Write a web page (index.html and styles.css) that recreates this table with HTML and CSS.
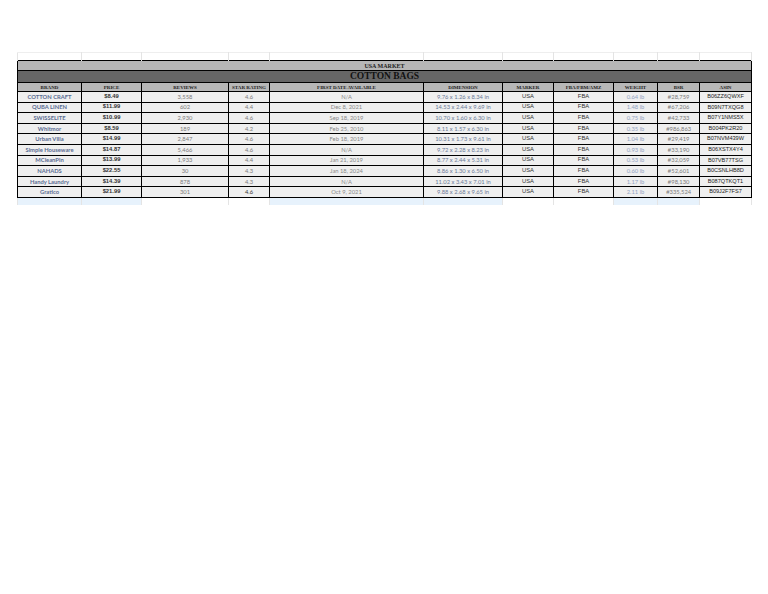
FILE: index.html
```html
<!DOCTYPE html>
<html>
<head>
<meta charset="utf-8">
<link rel="stylesheet" href="styles.css">
</head>
<body>
<table class="sheet">
  <colgroup>
    <col style="width:64px"><col style="width:60px"><col style="width:87px"><col style="width:41px"><col style="width:154px"><col style="width:79px"><col style="width:51px"><col style="width:60px"><col style="width:44px"><col style="width:42px"><col style="width:52px">
  </colgroup>
  <tr class="grid-row">
    <td></td><td></td><td></td><td></td><td></td><td></td><td></td><td></td><td></td><td></td><td></td>
  </tr>
  <tr class="market"><td colspan="11">USA MARKET</td></tr>
  <tr class="title"><td colspan="11">COTTON BAGS</td></tr>
  <tr class="head">
    <td>BRAND</td><td>PRICE</td><td>REVIEWS</td><td>STAR RATING</td><td>FIRST DATE AVAILABLE</td><td>DIMENSION</td><td>MARKER</td><td>FBA/FBM/AMZ</td><td>WEIGHT</td><td>BSR</td><td>ASIN</td>
  </tr>
  <tr class="data"><td class="brand">COTTON CRAFT</td><td class="price">$8.49</td><td class="muted">3,558</td><td class="muted">4.6</td><td class="date">N/A</td><td class="dim">9.76 x 1.26 x 8.34 in</td><td class="dark">USA</td><td class="dark">FBA</td><td class="wt">0.64 lb</td><td class="muted">#28,759</td><td class="asin">B06ZZ6QWXF</td></tr>
  <tr class="data"><td class="brand">QUBA LINEN</td><td class="price">$11.99</td><td class="muted">602</td><td class="muted">4.4</td><td class="date">Dec 8, 2021</td><td class="dim">14.53 x 2.44 x 9.69 in</td><td class="dark">USA</td><td class="dark">FBA</td><td class="wt">1.48 lb</td><td class="muted">#67,206</td><td class="asin">B09N7TXQG8</td></tr>
  <tr class="data"><td class="brand">SWISSELITE</td><td class="price">$10.99</td><td class="muted">2,930</td><td class="muted">4.6</td><td class="date">Sep 18, 2019</td><td class="dim">10.70 x 1.60 x 6.30 in</td><td class="dark">USA</td><td class="dark">FBA</td><td class="wt">0.75 lb</td><td class="muted">#42,733</td><td class="asin">B07Y1NMS5X</td></tr>
  <tr class="data"><td class="brand">Whitmor</td><td class="price">$8.59</td><td class="muted">189</td><td class="muted">4.2</td><td class="date">Feb 25, 2010</td><td class="dim">8.11 x 1.57 x 6.30 in</td><td class="dark">USA</td><td class="dark">FBA</td><td class="wt">0.35 lb</td><td class="muted">#986,863</td><td class="asin">B004PK2R20</td></tr>
  <tr class="data"><td class="brand">Urban Villa</td><td class="price">$14.99</td><td class="muted">2,847</td><td class="muted">4.6</td><td class="date">Feb 18, 2019</td><td class="dim">10.31 x 1.73 x 9.61 in</td><td class="dark">USA</td><td class="dark">FBA</td><td class="wt">1.04 lb</td><td class="muted">#29,419</td><td class="asin">B07NVM439W</td></tr>
  <tr class="data"><td class="brand">Simple Houseware</td><td class="price">$14.87</td><td class="muted">5,466</td><td class="muted">4.6</td><td class="date">N/A</td><td class="dim">9.72 x 2.28 x 8.23 in</td><td class="dark">USA</td><td class="dark">FBA</td><td class="wt">0.93 lb</td><td class="muted">#33,190</td><td class="asin">B06XSTX4Y4</td></tr>
  <tr class="data"><td class="brand">MCleanPin</td><td class="price">$13.99</td><td class="muted">1,933</td><td class="muted">4.4</td><td class="date">Jan 21, 2019</td><td class="dim">8.77 x 2.44 x 5.31 in</td><td class="dark">USA</td><td class="dark">FBA</td><td class="wt">0.53 lb</td><td class="muted">#32,059</td><td class="asin">B07VB77TSG</td></tr>
  <tr class="data"><td class="brand">NAHADS</td><td class="price">$22.55</td><td class="muted">30</td><td class="muted">4.3</td><td class="date">Jan 18, 2024</td><td class="dim">8.86 x 1.30 x 6.50 in</td><td class="dark">USA</td><td class="dark">FBA</td><td class="wt">0.60 lb</td><td class="muted">#52,601</td><td class="asin">B0CSNLHB8D</td></tr>
  <tr class="data"><td class="brand">Handy Laundry</td><td class="price">$14.39</td><td class="muted">878</td><td class="muted">4.3</td><td class="date">N/A</td><td class="dim">11.02 x 3.43 x 7.01 in</td><td class="dark">USA</td><td class="dark">FBA</td><td class="wt">1.17 lb</td><td class="muted">#98,130</td><td class="asin">B087QTKQT1</td></tr>
  <tr class="data"><td class="brand">Gratico</td><td class="price">$21.99</td><td class="muted">301</td><td class="rating-dark">4.6</td><td class="date">Oct 9, 2021</td><td class="dim">9.88 x 2.68 x 9.65 in</td><td class="dark">USA</td><td class="dark">FBA</td><td class="wt">2.11 lb</td><td class="muted">#335,524</td><td class="asin">B09J2F7FS7</td></tr>
  <tr class="grid-row tail">
    <td class="sel"></td><td class="sel"></td><td></td><td></td><td class="sel"></td><td class="sel"></td><td></td><td></td><td class="sel"></td><td class="sel"></td><td></td>
  </tr>
</table>
</body>
</html>
```
FILE: styles.css
```css
html, body {
  margin: 0;
  padding: 0;
  background: #ffffff;
}
body {
  padding: 52px 0 0 17px;
}
.sheet {
  border-collapse: collapse;
  table-layout: fixed;
  width: 734px;
  font-family: "Lato", "Liberation Sans", sans-serif;
  font-variant-numeric: lining-nums;
}
.sheet td {
  padding: 0;
  text-align: center;
  vertical-align: middle;
  white-space: nowrap;
  overflow: hidden;
  line-height: 1;
}
.grid-row td {
  height: 7px;
  border-left: 1px solid #e4e4e4;
  border-right: 1px solid #e4e4e4;
  border-top: 1px solid #eeeeee;
}
.grid-row.tail td {
  height: 7px;
  border-top: 1px solid #000;
  border-bottom: none;
}
.grid-row.tail td.sel {
  background: #e7f2fc;
}
.market td {
  height: 9px;
  background: #b7b7b7;
  border: 1px solid #000;
  font-family: "Liberation Serif", serif;
  font-weight: bold;
  font-size: 6px;
  color: #222;
}
.title td {
  height: 11px;
  background: #666666;
  border: 1px solid #000;
  font-family: "Liberation Serif", serif;
  font-weight: bold;
  font-size: 9.5px;
  color: #111;
}
.head td {
  height: 8px;
  background: #b7b7b7;
  border: 1px solid #000;
  font-family: "Liberation Serif", serif;
  font-weight: bold;
  font-size: 5px;
  color: #222;
}
.data td {
  height: 9.6px;
  background: #efefef;
  border: 1px solid #000;
  font-size: 5.8px;
  color: #777;
}
.data td.brand {
  color: #5a6c92;
  font-weight: bold;
}
.data td.price {
  color: #333;
  font-weight: bold;
  font-family: "Liberation Sans", sans-serif;
}
.data td.muted {
  color: #7c7c7c;
}
.data td.rating-dark {
  color: #333;
}
.data td.date {
  color: #8a8a8a;
}
.data td.dim {
  color: #6c7b98;
}
.data td.dark {
  color: #333;
  font-family: "Liberation Sans", sans-serif;
}
.data td.wt {
  color: #93a4c2;
}
.data td.asin {
  color: #1e1e1e;
  font-family: "Liberation Sans", sans-serif;
  font-size: 5.6px;
}
```
